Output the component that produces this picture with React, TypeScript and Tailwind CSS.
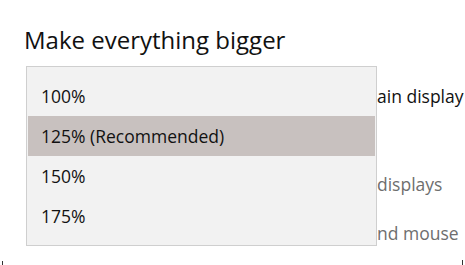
import React from 'react';

const options = ['100%', '125% (Recommended)', '150%', '175%'];
const selected = 1;

const App = () => {
  return (
    <div
      className="relative w-[465px] h-[265px] overflow-hidden bg-white text-black"
      style={{ fontFamily: '"Open Sans", "Noto Sans", sans-serif' }}
    >
      <h1 className="pl-[24px] pt-[24px] text-[24px] leading-[32px] font-normal text-[#111]">
        Make everything bigger
      </h1>

      <div className="mt-[10px] flex items-start">
        {/* open dropdown list */}
        <div className="ml-[26px] w-[351px] h-[180px] border border-[#cfcfcf] bg-[#f2f2f2] py-[9px] px-px">
          {options.map((o, i) => (
            <div
              key={o}
              className={`h-[40px] flex items-center pl-[13px] text-[17.5px] text-[#111] ${
                i === selected ? 'bg-[#c8c1bf]' : ''
              }`}
            >
              {o}
            </div>
          ))}
        </div>

        {/* text of the page that peeks out behind the list */}
        <div className="flex flex-col text-[17.5px] leading-[24px]">
          <span className="mt-[18px] text-[#111]">ain display</span>
          <span className="mt-[64px] text-[#6e6e6e]">displays</span>
          <span className="mt-[25px] text-[#6e6e6e]">nd mouse</span>
        </div>
      </div>

      {/* cut-off marks at the bottom edge */}
      <div className="absolute left-[2px] top-[261px] w-px h-[4px] bg-[#333]" />
      <div className="absolute left-[462px] top-[260px] w-px h-[5px] bg-[#333]" />
    </div>
  );
};

export default App;
